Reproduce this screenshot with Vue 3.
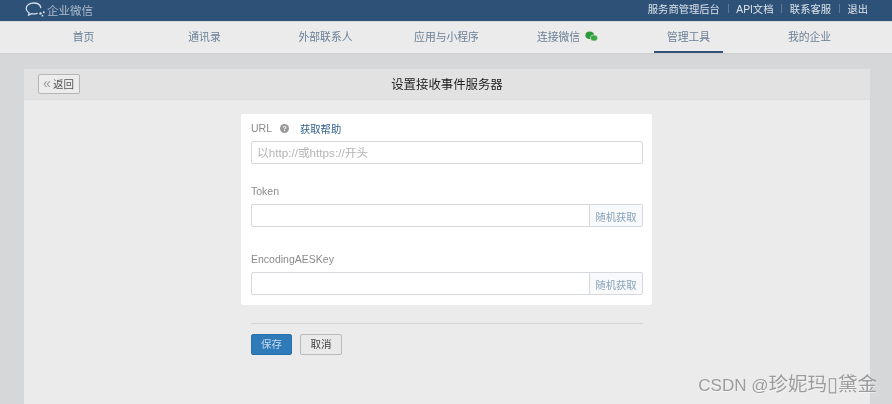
<script setup>
const navItems = [
  { label: "首页" },
  { label: "通讯录" },
  { label: "外部联系人" },
  { label: "应用与小程序" },
  { label: "连接微信", wechat: true },
  { label: "管理工具", active: true },
  { label: "我的企业" },
];

const topLinks = ["服务商管理后台", "API文档", "联系客服", "退出"];
</script>

<template>
  <div class="page">
    <header class="topbar">
      <div class="logo">
        <svg class="logo-icon" width="21" height="15" viewBox="0 0 21 15" fill="none">
          <path d="M15.800 5.500C15.200 2.900 12.300 1 8.800 1 4.700 1 1.200 3.300 1.200 6.400c0 1.800 1.100 3.300 2.800 4.300l-.4 2.500 2.900-1.500c.7.100 1.500.2 2.300.2 1.300 0 2.400-.2 3.400-.6" stroke="#d5dee8" stroke-width="1.300" stroke-linecap="round" />
          <circle cx="15.500" cy="11.500" r="1.200" fill="#d5dee8" />
          <circle cx="18.800" cy="10.300" r="1" fill="#d5dee8" />
          <circle cx="17.500" cy="13.700" r=".9" fill="#d5dee8" />
        </svg>
        <span class="logo-text">企业微信</span>
      </div>
      <div class="top-links">
        <template v-for="(link, i) in topLinks" :key="link">
          <span v-if="i > 0" class="sep"></span>
          <span class="top-link">{{ link }}</span>
        </template>
      </div>
    </header>

    <nav class="nav">
      <div class="nav-inner">
        <div v-for="item in navItems" :key="item.label" class="nav-item">
          <span class="nav-label" :class="{ active: item.active }">
            {{ item.label }}
            <svg v-if="item.wechat" class="wechat" width="13" height="11" viewBox="0 0 13 11">
              <ellipse cx="4.700" cy="4.200" rx="4.300" ry="3.700" fill="#2f9a3c" />
              <ellipse cx="9" cy="7" rx="3.700" ry="3.100" fill="#3aa845" stroke="#ebebeb" stroke-width=".6" />
            </svg>
          </span>
        </div>
      </div>
    </nav>

    <main class="card">
      <div class="card-head">
        <button class="back-btn"><span class="chev">«</span>返回</button>
        <h1 class="title">设置接收事件服务器</h1>
      </div>
      <div class="card-body">
        <div class="form-wrap">
          <form class="panel">
            <div class="field">
              <div class="label">
                URL
                <span class="help">?</span>
                <a class="help-link">获取帮助</a>
              </div>
              <div class="input-row">
                <span class="input placeholder">以http://或https://开头</span>
              </div>
            </div>
            <div class="field token">
              <div class="label">Token</div>
              <div class="input-row">
                <span class="input"></span>
                <span class="random">随机获取</span>
              </div>
            </div>
            <div class="field aes">
              <div class="label">EncodingAESKey</div>
              <div class="input-row">
                <span class="input"></span>
                <span class="random">随机获取</span>
              </div>
            </div>
          </form>
          <div class="actions">
            <button class="btn primary">保存</button>
            <button class="btn">取消</button>
          </div>
        </div>
      </div>
    </main>

    <div class="watermark">CSDN @<span class="wm-cjk">珍妮玛▯黛金</span></div>
  </div>
</template>

<style>
html,
body {
  margin: 0;
  background: #d6d7d9;
}
</style>

<style scoped>
.page {
  position: relative;
  width: 892px;
  height: 404px;
  overflow: hidden;
  background: #d6d7d9;
  font-family: "Liberation Sans", "Noto Sans CJK SC", sans-serif;
  filter: blur(0.35px);
}
.topbar {
  display: flex;
  justify-content: space-between;
  align-items: center;
  height: 21px;
  padding: 0 24px 0 25px;
  background: #2e5178;
}
.logo {
  display: flex;
  align-items: center;
  gap: 1px;
}
.logo-icon {
  margin-top: -3px;
}
.logo-text {
  margin-top: -1px;
  font-size: 11.500px;
  color: #aebccc;
}
.top-links {
  display: flex;
  align-items: center;
  margin-top: -5px;
  font-size: 10.300px;
  color: #dde3ea;
}
.sep {
  width: 1px;
  height: 9px;
  margin: 0 7.700px;
  background: #5d7a98;
}
.nav {
  height: 31px;
  margin-top: 1px;
  background: #ebebeb;
  box-shadow: 0 1px 1px #cfd0d2;
}
.nav-inner {
  display: flex;
  width: 847px;
  height: 100%;
  margin-left: 23px;
}
.nav-item {
  flex: 1;
  display: flex;
  justify-content: center;
}
.nav-label {
  display: flex;
  align-items: center;
  gap: 5px;
  padding: 0 13px 1px;
  font-size: 10.800px;
  color: #6a7f96;
  border-bottom: 2px solid transparent;
}
.nav-label.active {
  border-bottom-color: #2e5178;
}
.card {
  width: 846px;
  height: 340px;
  margin: 16px 0 0 24px;
  border-radius: 2px 2px 0 0;
  background: #ebebeb;
}
.card-head {
  position: relative;
  display: flex;
  align-items: center;
  justify-content: center;
  height: 31px;
  background: #e2e2e2;
  border-bottom: 1px solid #dcdfdf;
  box-sizing: border-box;
}
.back-btn {
  position: absolute;
  left: 14px;
  top: 5px;
  width: 42px;
  height: 20px;
  padding: 0 1px 2px 0;
  font: inherit;
  font-size: 10.500px;
  color: #555;
  background: #ececec;
  border: 1px solid #b5b5b5;
  border-radius: 2px;
}
.chev {
  margin-right: 2px;
  font-size: 14px;
  line-height: 12px;
  color: #999;
}
.title {
  margin: 0;
  font-size: 12.400px;
  font-weight: 400;
  color: #222;
}
.card-body {
  display: flex;
  justify-content: center;
  padding-top: 14px;
}
.form-wrap {
  width: 411px;
  margin-left: -1px;
}
.panel {
  padding: 7px 10px 10px;
  background: #fff;
  border-radius: 2px;
}
.field.token {
  margin-top: 20px;
}
.field.aes {
  margin-top: 25px;
}
.label {
  display: flex;
  align-items: center;
  height: 14px;
  margin-bottom: 6px;
  font-size: 10.500px;
  color: #8a8a8a;
}
.help {
  display: inline-block;
  width: 9px;
  height: 9px;
  margin: 0 11px 0 8px;
  border-radius: 50%;
  background: #9a9a9a;
  color: #fff;
  font-size: 7px;
  font-weight: 700;
  line-height: 9px;
  text-align: center;
}
.help-link {
  font-size: 10.300px;
  color: #2f5f8e;
}
.input-row {
  display: flex;
  width: 392px;
  height: 23px;
  box-sizing: border-box;
  border: 1px solid #d5d9de;
  border-radius: 2px;
  background: #fff;
}
.input {
  flex: 1;
  display: flex;
  align-items: center;
  padding-left: 5px;
  font-size: 10.500px;
}
.input.placeholder {
  padding-bottom: 2px;
  font-size: 11.700px;
  color: #b4b4b4;
}
.random {
  display: flex;
  align-items: center;
  justify-content: center;
  width: 52px;
  padding-top: 1px;
  font-size: 10.300px;
  color: #86a0ba;
  background: #f8f9fa;
  border-left: 1px solid #d5d9de;
}
.actions {
  display: flex;
  gap: 8px;
  width: 392px;
  margin: 18px 0 0 10px;
  padding-top: 10px;
  border-top: 1px solid #d4d4d4;
}
.btn {
  width: 42px;
  height: 21px;
  padding: 0 0 2px;
  font: inherit;
  font-size: 10.500px;
  color: #444;
  background: #e9e9e9;
  border: 1px solid #b9b9b9;
  border-radius: 2px;
}
.btn.primary {
  width: 41px;
  color: #c6d9ec;
  background: #2f7ab9;
  border-color: #2a70ab;
}
.watermark {
  position: absolute;
  right: 15px;
  bottom: 7px;
  font-size: 17px;
  line-height: 22px;
  color: #9c9c9c;
  text-shadow: 0 1px 1px rgba(255, 255, 255, 0.6);
}
.wm-cjk {
  font-size: 19.500px;
}
</style>
